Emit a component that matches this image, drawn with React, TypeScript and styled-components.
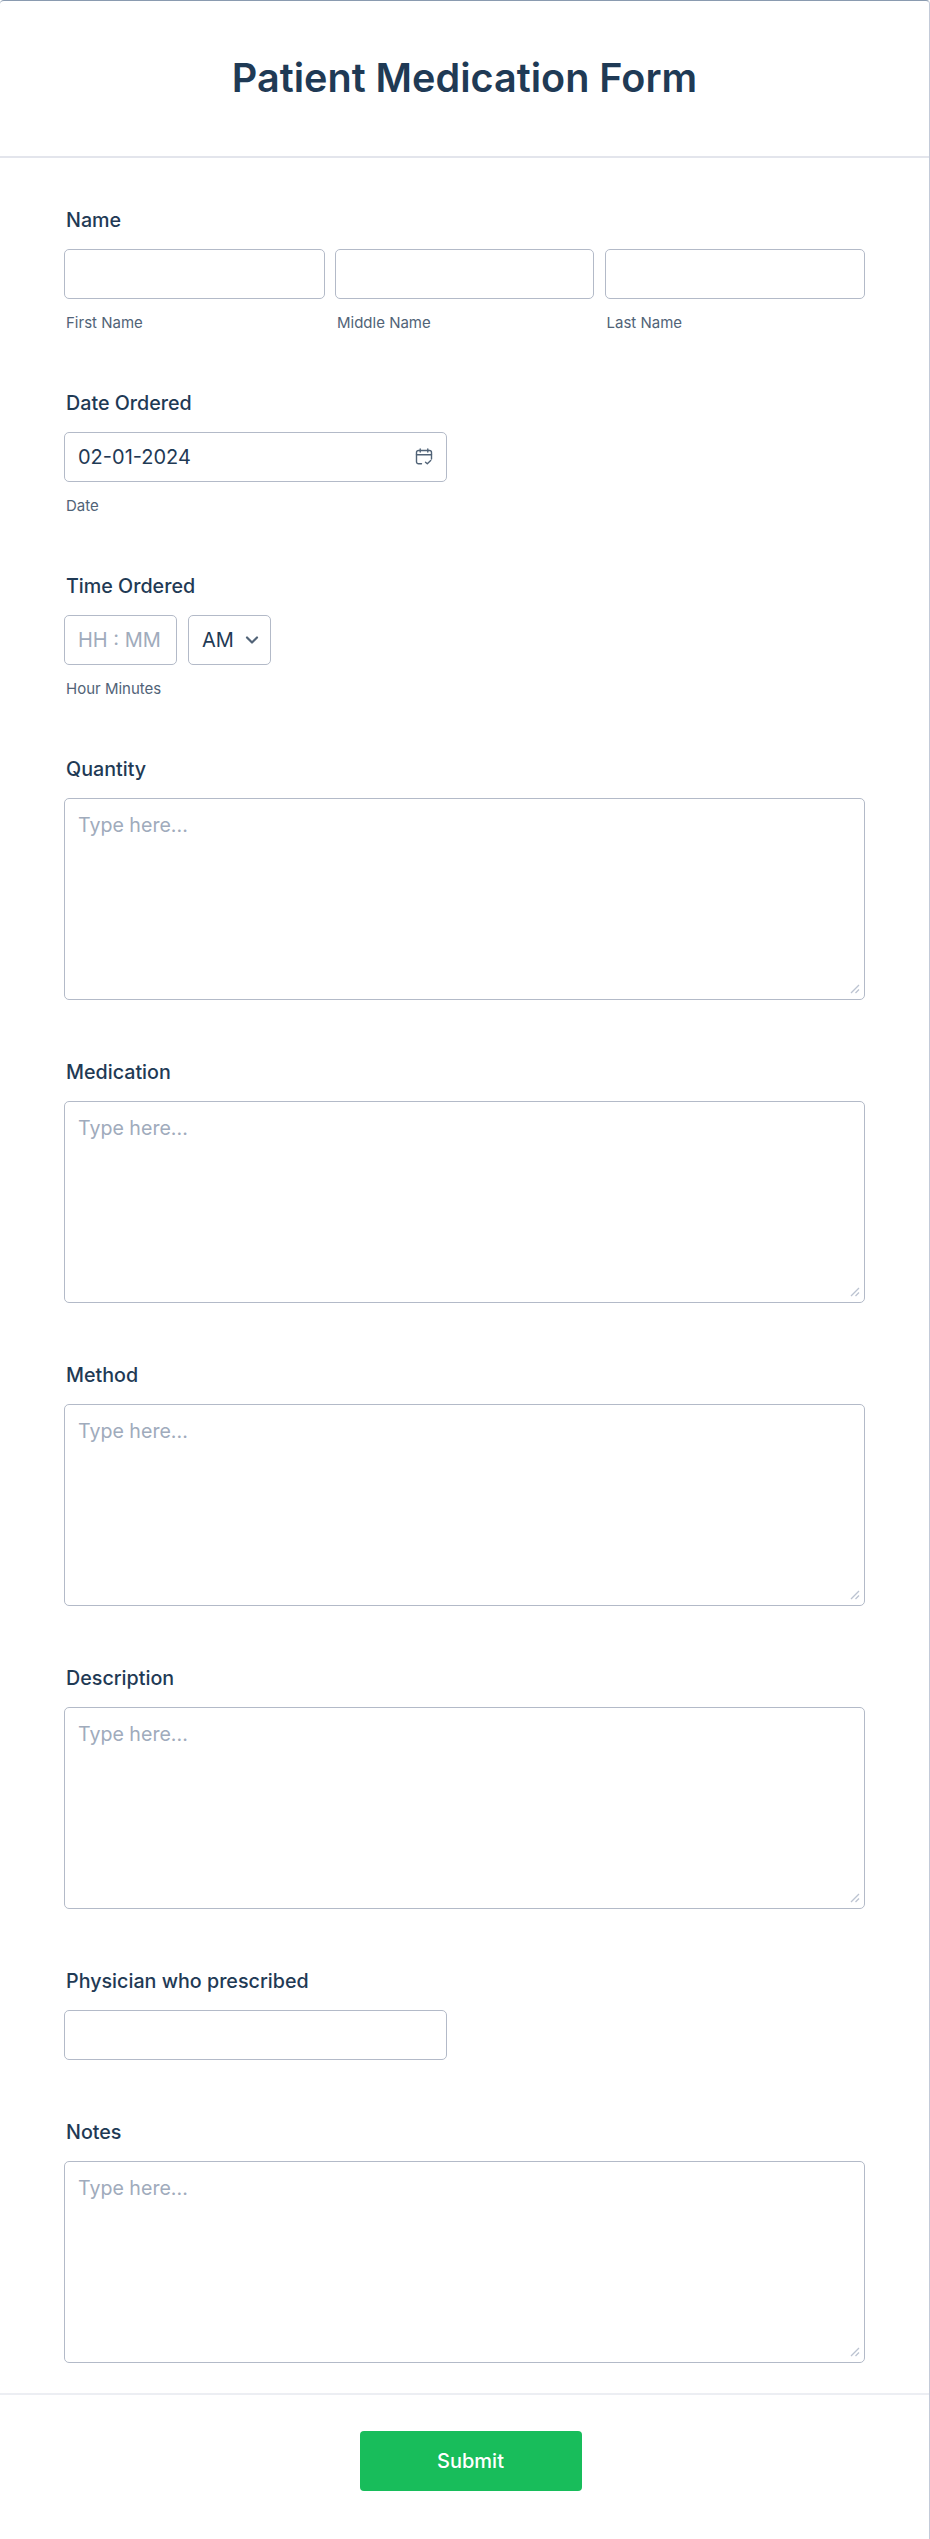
import React from "react";
import styled, { createGlobalStyle } from "styled-components";

const Global = createGlobalStyle`
  html, body { margin: 0; padding: 0; background: #fff; }
  * { box-sizing: border-box; }
  body { font-family: Inter, "Noto Sans", sans-serif; }
`;

const Page = styled.div`
  width: 930px;
  height: 2539px;
  overflow: hidden;
  background: #fff;
  border-top: 1px solid #8a9bb0;
  border-right: 1px solid #c3cad8;
  border-radius: 4px 4px 0 0;
`;

const Header = styled.header`
  height: 157px;
  border-bottom: 2px solid #e3e5ec;
  display: flex;
  align-items: center;
  justify-content: center;
  padding-bottom: 2px;
`;

const Title = styled.h1`
  margin: 0;
  font-size: 39.6px;
  line-height: 48px;
  font-weight: 600;
  color: #1f3a55;
`;

const Form = styled.form`
  height: 2235px;
  padding: 46px 64px 0;
`;

const Field = styled.div<{ $gap: number }>`
  margin-bottom: ${(p) => p.$gap}px;
`;

const Label = styled.label`
  display: block;
  padding-left: 2px;
  margin-bottom: 13px;
  font-size: 19.7px;
  line-height: 32px;
  font-weight: 450;
  color: #1f3a55;
`;

const Row = styled.div`
  display: grid;
  grid-template-columns: 260.5px 259px 260.5px;
  column-gap: 10.5px;
  width: 801px;
`;

const TextInput = styled.input<{ $width?: number }>`
  display: block;
  width: ${(p) => (p.$width ? `${p.$width}px` : "100%")};
  height: 50px;
  padding: 0 13px;
  background: #fff;
  border: 1px solid #b3bac8;
  border-radius: 5px;
  outline: none;
  font-family: inherit;
  font-size: 20px;
  color: #1f3a55;
  &::placeholder { color: #a0abbc; opacity: 1; }
`;

const SubLabel = styled.span`
  display: block;
  padding-left: 2px;
  margin-top: 13px;
  font-size: 15px;
  line-height: 22px;
  color: #516377;
`;

const InputWrap = styled.div<{ $width: number }>`
  position: relative;
  width: ${(p) => p.$width}px;
`;

const DateIcon = styled.svg`
  position: absolute;
  right: 14px;
  top: 16px;
  width: 18px;
  height: 18px;
  fill: none;
  stroke: #516377;
  stroke-width: 1.4;
  stroke-linecap: round;
  stroke-linejoin: round;
`;

const TimeRow = styled.div`
  display: flex;
  gap: 11px;
`;

const Select = styled.select`
  appearance: none;
  display: block;
  width: 83px;
  height: 50px;
  padding: 0 0 0 13px;
  background: #fff;
  border: 1px solid #b3bac8;
  border-radius: 5px;
  outline: none;
  font-family: inherit;
  font-size: 20px;
  color: #1f3a55;
`;

const Chevron = styled.svg`
  position: absolute;
  right: 12px;
  top: 20px;
  width: 14px;
  height: 10px;
  fill: none;
  stroke: #516377;
  stroke-width: 2.2;
  stroke-linecap: round;
  stroke-linejoin: round;
  pointer-events: none;
`;

const AreaWrap = styled.div`
  position: relative;
  width: 801px;
  height: 202px;
`;

const TextArea = styled.textarea`
  display: block;
  width: 100%;
  height: 100%;
  padding: 12px 13px;
  background: #fff;
  border: 1px solid #b3bac8;
  border-radius: 5px;
  outline: none;
  font-family: inherit;
  font-size: 19.6px;
  line-height: 28px;
  color: #1f3a55;
  resize: none;
  &::placeholder { color: #a0abbc; opacity: 1; }
`;

const Grip = styled.svg`
  position: absolute;
  right: 5px;
  bottom: 6px;
  width: 10px;
  height: 10px;
  fill: none;
  stroke: #bcc3d1;
  stroke-width: 1.3;
  pointer-events: none;
`;

const Footer = styled.footer`
  height: 146px;
  border-top: 2px solid #eceef3;
  display: flex;
  justify-content: center;
  padding: 36px 0 0 12px;
`;

const Submit = styled.button`
  width: 222px;
  height: 60px;
  background: #18bd5b;
  border: none;
  border-radius: 4px;
  color: #fff;
  font-family: inherit;
  font-size: 20px;
  font-weight: 500;
`;

const AreaField = ({ label }: { label: string }) => (
  <Field $gap={56}>
    <Label>{label}</Label>
    <AreaWrap>
      <TextArea placeholder="Type here..." />
      <Grip viewBox="0 0 10 10">
        <path d="M1 9l8-8M5.5 9L9 5.5" />
      </Grip>
    </AreaWrap>
  </Field>
);

export default function App() {
  return (
    <>
      <Global />
      <Page>
        <Header>
          <Title>Patient Medication Form</Title>
        </Header>
        <Form>
          <Field $gap={53}>
            <Label>Name</Label>
            <Row>
              {["First Name", "Middle Name", "Last Name"].map((s) => (
                <div key={s}>
                  <TextInput />
                  <SubLabel>{s}</SubLabel>
                </div>
              ))}
            </Row>
          </Field>
          <Field $gap={53}>
            <Label>Date Ordered</Label>
            <InputWrap $width={383}>
              <TextInput defaultValue="02-01-2024" />
              <DateIcon viewBox="0 0 18 18">
                <path d="M6.5 15.8H3.5a2 2 0 0 1-2-2V4.5a2 2 0 0 1 2-2h11a2 2 0 0 1 2 2v6.5" />
                <path d="M1.5 6.8h15M5.2 1v3M12.8 1v3" />
                <path d="M10.5 14.2l1.8 1.6 3.4-3.2" />
              </DateIcon>
            </InputWrap>
            <SubLabel>Date</SubLabel>
          </Field>
          <Field $gap={53}>
            <Label>Time Ordered</Label>
            <TimeRow>
              <TextInput $width={113} placeholder="HH : MM" />
              <InputWrap $width={83}>
                <Select defaultValue="AM">
                  <option>AM</option>
                  <option>PM</option>
                </Select>
                <Chevron viewBox="0 0 14 10">
                  <path d="M2 2.5l5 5 5-5" />
                </Chevron>
              </InputWrap>
            </TimeRow>
            <SubLabel>Hour Minutes</SubLabel>
          </Field>
          <AreaField label="Quantity" />
          <AreaField label="Medication" />
          <AreaField label="Method" />
          <AreaField label="Description" />
          <Field $gap={56}>
            <Label>Physician who prescribed</Label>
            <TextInput $width={383} />
          </Field>
          <AreaField label="Notes" />
        </Form>
        <Footer>
          <Submit type="button">Submit</Submit>
        </Footer>
      </Page>
    </>
  );
}
